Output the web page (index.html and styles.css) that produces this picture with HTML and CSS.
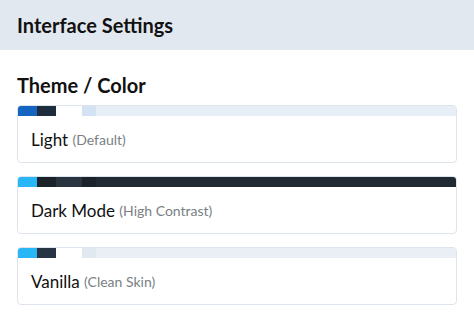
FILE: index.html
```html
<!DOCTYPE html>
<html>
<head>
<meta charset="utf-8">
<link rel="stylesheet" href="styles.css">
</head>
<body>
<header class="topbar"><h1 class="title">Interface Settings</h1></header>
<main class="content">
  <h2 class="section">Theme / Color</h2>
  <div class="card">
    <div class="bar">
      <span class="seg s1" style="background:#1565c0"></span>
      <span class="seg s2" style="background:#1e2d3d"></span>
      <span class="seg s3" style="background:#ffffff"></span>
      <span class="seg s4" style="background:#d4e3f3"></span>
      <span class="seg rest" style="background:#e8eef6"></span>
    </div>
    <div class="label">Light <span class="sub">(Default)</span></div>
  </div>
  <div class="card">
    <div class="bar">
      <span class="seg s1" style="background:#29b6f6"></span>
      <span class="seg s2" style="background:#1c2229"></span>
      <span class="seg s3" style="background:#2a3440"></span>
      <span class="seg s4" style="background:#1c2229"></span>
      <span class="seg rest" style="background:#212a33"></span>
    </div>
    <div class="label">Dark Mode <span class="sub">(High Contrast)</span></div>
  </div>
  <div class="card">
    <div class="bar">
      <span class="seg s1" style="background:#29b6f6"></span>
      <span class="seg s2" style="background:#263444"></span>
      <span class="seg s3" style="background:#ffffff"></span>
      <span class="seg s4" style="background:#e2e8f0"></span>
      <span class="seg rest" style="background:#eaeff5"></span>
    </div>
    <div class="label">Vanilla <span class="sub">(Clean Skin)</span></div>
  </div>
</main>
</body>
</html>
```
FILE: styles.css
```css
html, body {
  margin: 0;
  padding: 0;
  background: #ffffff;
  font-family: "Lato", "Open Sans", sans-serif;
  color: #1a1a1a;
}
.topbar {
  background: #e2e8f0;
  height: 50px;
  display: flex;
  align-items: center;
  padding: 0 17px;
  box-sizing: border-box;
}
.title {
  margin: 0;
  font-size: 20px;
  font-weight: 700;
  color: #111;
}
.content {
  padding: 21px 17px 0;
  display: flex;
  flex-direction: column;
  gap: 13px;
}
.section {
  margin: 0 0 -7px;
  font-size: 20px;
  font-weight: 700;
  color: #111;
  line-height: 28px;
}
.card {
  border: 1px solid #dde4ec;
  border-radius: 4px;
  overflow: hidden;
}
.bar {
  display: flex;
  height: 10px;
}
.seg { display: block; height: 100%; }
.s1 { width: 19px; }
.s2 { width: 19px; }
.s3 { width: 26px; }
.s4 { width: 14px; }
.rest { flex: 1; }
.label {
  height: 46px;
  display: flex;
  align-items: center;
  padding-left: 13px;
  font-size: 17px;
  color: #111;
  white-space: pre;
}
.sub {
  font-size: 14px;
  color: #7a7f85;
}
```
